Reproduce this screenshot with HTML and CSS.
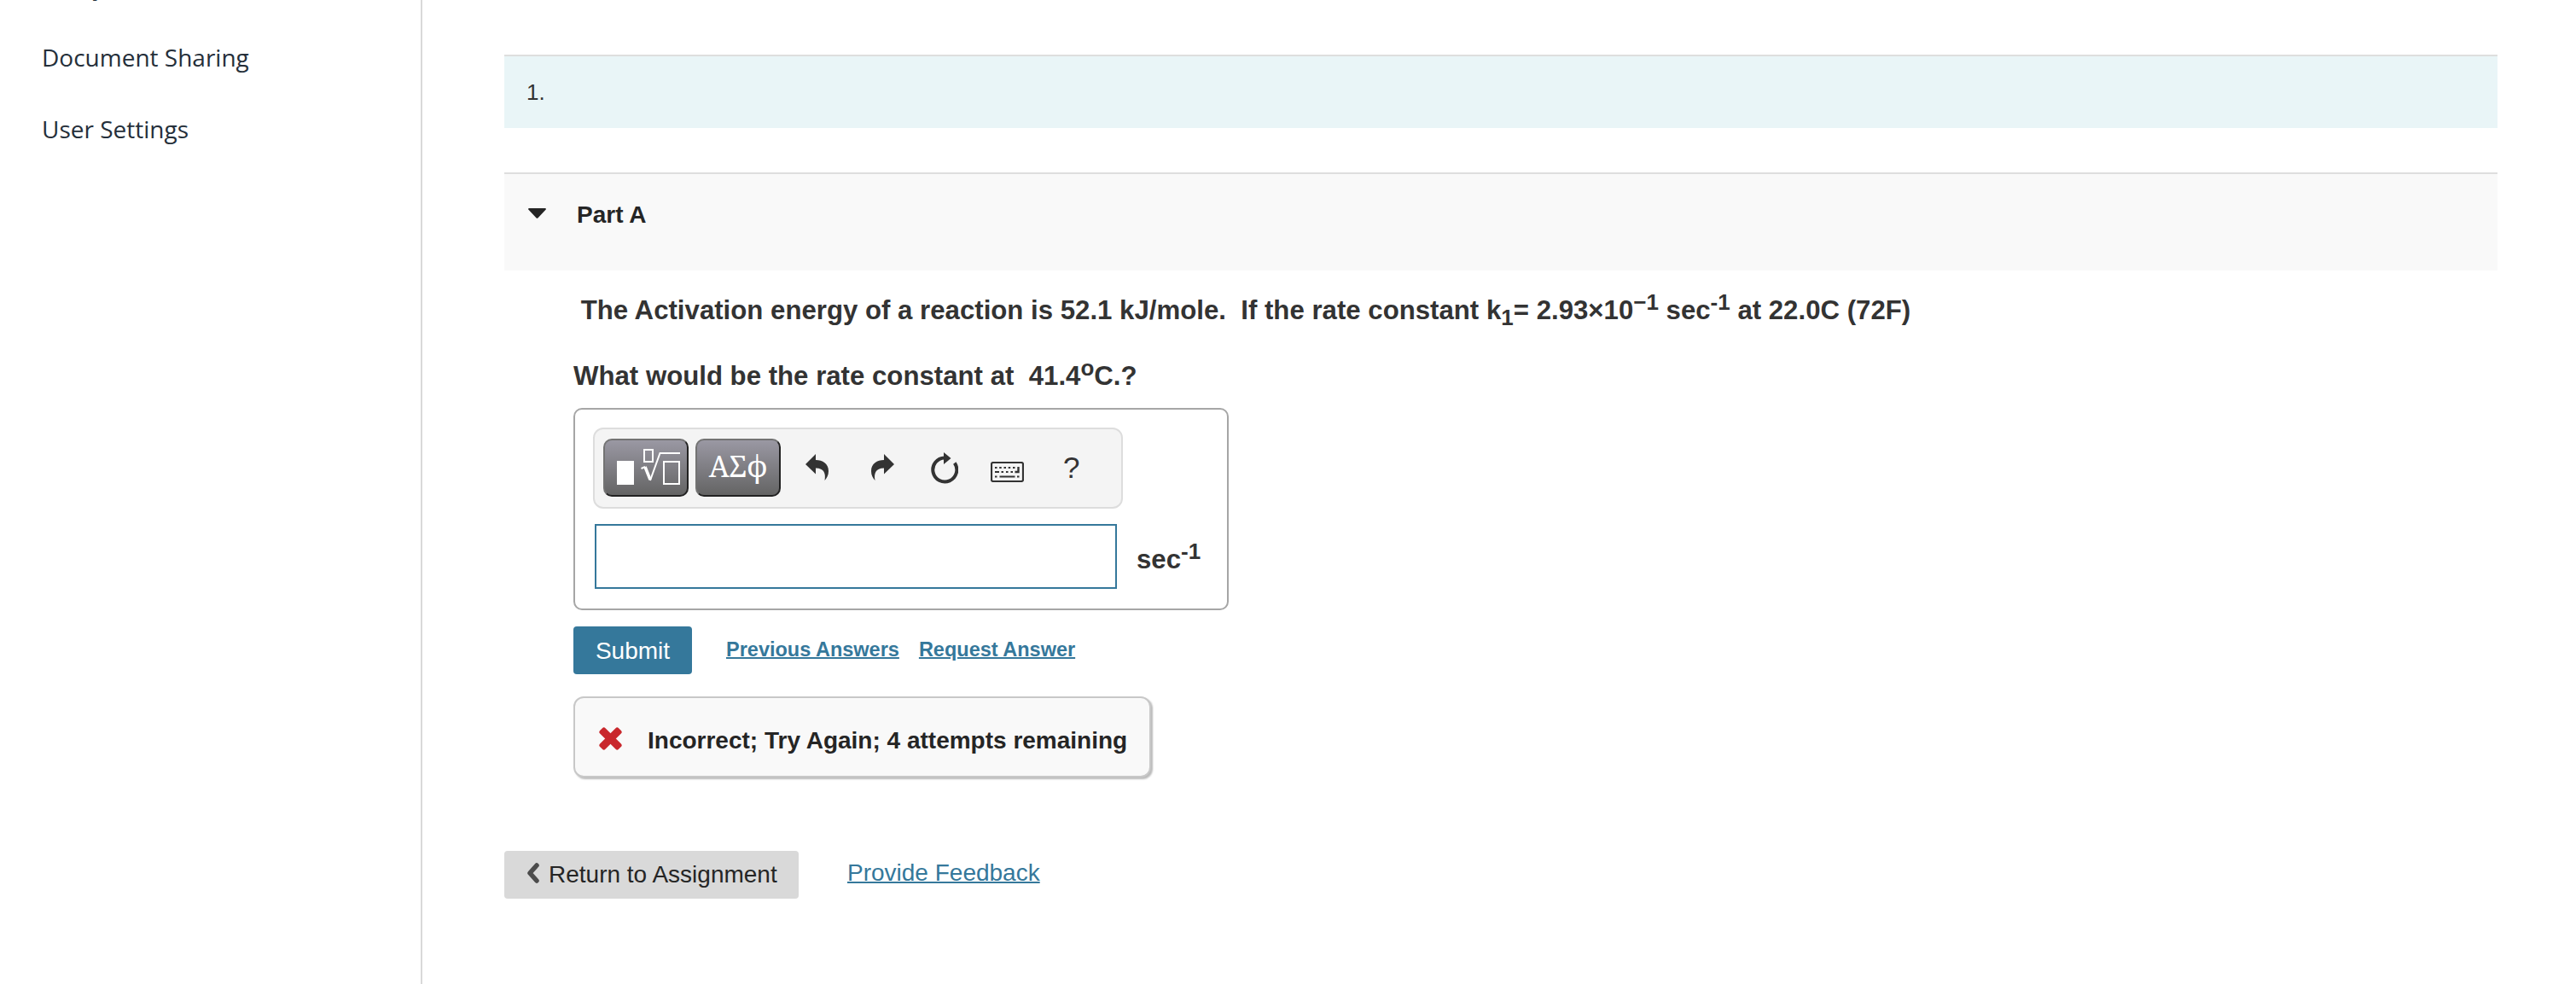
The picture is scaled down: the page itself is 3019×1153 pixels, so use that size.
FILE: index.html
```html
<!DOCTYPE html>
<html lang="en">
<head>
    <meta charset="UTF-8">
    <meta name="viewport" content="width=device-width, initial-scale=1.0">
    <title>Part A</title>
    <link rel="stylesheet" href="styles.css">
</head>
<body>
    <nav class="sidebar">
        <a>Study Area</a>
        <a>Document Sharing</a>
        <a>User Settings</a>
    </nav>
    <main class="content">
        <div class="item-number">1.</div>
        <section class="part">
            <div class="part-header">
                <svg class="caret" width="21" height="12" viewBox="0 0 21 12"><path d="M1 0H20Q21.5 .5 20.5 1.8L11.6 11.2Q10.500 12.400 9.400 11.2L.5 1.800Q-.5 .5 1 0Z" fill="#252525"/></svg>
                <h2>Part A</h2>
            </div>
            <div class="part-body">
                <p class="question">&nbsp;The Activation energy of a reaction is 52.1 kJ/mole.&nbsp; If the rate constant k<sub>1</sub>= 2.93×10<sup>−1</sup> sec<sup>-1</sup> at 22.0C (72F)</p>
                <p class="question second">What would be the rate constant at&nbsp; 41.4<sup>o</sup>C.?</p>
                <div class="answer-box">
                    <div class="toolbar">
                        <button class="tool-btn">
                            <svg width="96" height="64" viewBox="0 0 96 64" fill="none" stroke="#fff">
                                <rect x="14" y="24" width="20" height="28" fill="#fff" stroke="none"/>
                                <rect x="46" y="11" width="10" height="14" stroke-width="2"/>
                                <path d="M42.500 33L47 31" stroke-width="2"/>
                                <path d="M47 31L53 46" stroke-width="3.500"/>
                                <path d="M53 47L64.500 15H88" stroke-width="2"/>
                                <rect x="69" y="25" width="18" height="26" stroke-width="2"/>
                            </svg>
                        </button>
                        <button class="tool-btn greek">ΑΣϕ</button>
                        <div class="tool-icons">
                            <svg class="undo" width="27" height="31" viewBox="0 0 27 31"><path d="M0 12L12 0V7C20 7 27 11 27 20C27 25 25 28 22.500 31C24 23 22 16.500 12 16.500V23.500Z" fill="#333"/></svg>
                            <svg class="redo" width="27" height="31" viewBox="0 0 27 31"><path d="M27 12L15 0V7C7 7 0 11 0 20C0 25 2 28 4.500 31C3 23 5 16.500 15 16.500V23.500Z" fill="#333"/></svg>
                            <svg class="reset" width="32" height="37" viewBox="0 0 32 37"><path d="M16 6.500A14 14 0 1 0 27.800 12.500" fill="none" stroke="#333" stroke-width="4"/><path d="M15 0L23.500 7L15 14Z" fill="#333"/></svg>
                            <svg class="keyboard" width="39" height="24" viewBox="0 0 39 24">
                                <rect x="1" y="1" width="37" height="22" rx="2" fill="none" stroke="#333" stroke-width="2.200"/>
                                <path d="M5 7H7.500M10.200 7H12.700M15.500 7H18M20.700 7H23.200M26 7H28.500M5 12H10M12.500 12H15M18 12H20.500M23.500 12H26M5 17.500H7.500M10.500 17.500H28.500M31 17.500H33.500" stroke="#333" stroke-width="2.200"/>
                                <path d="M28.500 12H32.500V6" fill="none" stroke="#333" stroke-width="2.400"/>
                            </svg>
                            <span class="help">?</span>
                        </div>
                    </div>
                    <div class="answer-row">
                        <input class="answer-input" type="text">
                        <span class="unit">sec<sup>-1</sup></span>
                    </div>
                </div>
                <div class="actions">
                    <button class="submit">Submit</button>
                    <a class="previous">Previous Answers</a>
                    <a class="request">Request Answer</a>
                </div>
                <div class="feedback">
                    <svg width="27" height="27" viewBox="0 0 27 27" fill="#c9282d">
                        <rect x="-2" y="9" width="31" height="9" rx="2.500" transform="rotate(45 13.500 13.500)"/>
                        <rect x="-2" y="9" width="31" height="9" rx="2.500" transform="rotate(-45 13.500 13.500)"/>
                    </svg>
                    <span>Incorrect; Try Again; 4 attempts remaining</span>
                </div>
            </div>
        </section>
        <div class="footer">
            <button class="return">
                <svg width="15" height="24" viewBox="0 0 15 24"><path d="M12 3L4 12L12 21" fill="none" stroke="#4c4c4c" stroke-width="5.500" stroke-linecap="round" stroke-linejoin="round"/></svg>
                <span>Return to Assignment</span>
            </button>
            <a class="provide">Provide Feedback</a>
        </div>
    </main>
</body>
</html>
```
FILE: styles.css
```css
* {
    box-sizing: border-box;
}
body {
    margin: 0;
    height: 1153px;
    display: flex;
    overflow: hidden;
    background: #fff;
    color: #252525;
    font-family: "Liberation Sans", Arial, sans-serif;
    font-size: 28px;
}
svg {
    display: block;
    flex: none;
}
button {
    font-family: inherit;
    padding: 0;
    border: none;
}
.sidebar {
    width: 495px;
    flex: none;
    border-right: 2px solid #d9d9d9;
    padding-left: 49px;
    font-family: "Open Sans", sans-serif;
    font-size: 28px;
    color: #252f3a;
}
.sidebar a {
    display: block;
    height: 84px;
    line-height: 84px;
}
.sidebar a:first-child {
    margin-top: -59px;
}
.content {
    width: 2432px;
    padding: 64px 0 0 96px;
}
.item-number {
    height: 86px;
    border-top: 2px solid #dedede;
    background: #e9f5f7;
    padding: 26px 0 0 26px;
    font-size: 26px;
    line-height: 32px;
    color: #333;
}
.part {
    margin-top: 52px;
}
.part-header {
    height: 115px;
    border-top: 2px solid #dedede;
    background: #f9f9f9;
    display: flex;
    padding-left: 28px;
}
.caret {
    margin-top: 40px;
}
.part-header h2 {
    margin: 32px 0 0 36px;
    font-size: 28px;
    line-height: 32px;
}
.part-body {
    padding-left: 81px;
}
.question {
    margin: 0;
    padding-top: 29px;
    height: 77px;
    font-size: 31.2px;
    font-weight: bold;
    line-height: 36px;
    color: #333;
    white-space: nowrap;
}
.question.second {
    height: 84px;
}
sub, sup {
    font-size: 26px;
    line-height: 0;
    vertical-align: baseline;
    position: relative;
}
sup {
    top: -11px;
}
sub {
    top: 7px;
}
.answer-box {
    width: 768px;
    height: 237px;
    border: 2px solid #a6a6a6;
    border-radius: 10px;
    padding: 21px;
}
.toolbar {
    width: 621px;
    height: 95px;
    border: 2px solid #ddd;
    border-radius: 12px;
    background: #f4f4f4;
    display: flex;
    gap: 8px;
    padding: 11px 10px;
}
.tool-btn {
    width: 100px;
    height: 68px;
    flex: none;
    border: 2px solid;
    border-color: #737373 #222 #222 #737373;
    border-radius: 10px;
    background: linear-gradient(#9a98a3, #646464);
    color: #fff;
}
.greek {
    font-family: "Noto Serif", "DejaVu Serif", "Liberation Serif", serif;
    font-size: 34px;
    padding-bottom: 5px;
}
.tool-icons {
    display: flex;
    align-items: flex-start;
}
.undo {
    margin: 18px 0 0 21px;
}
.redo {
    margin: 18px 0 0 50px;
}
.reset {
    margin: 16px 0 0 43px;
}
.keyboard {
    margin: 27px 0 0 38px;
}
.help {
    margin: 13px 0 0 46px;
    font-size: 35px;
    line-height: 42px;
    color: #333;
}
.answer-row {
    display: flex;
    padding: 18px 0 0 2px;
}
.answer-input {
    appearance: none;
    width: 612px;
    height: 76px;
    border: 2px solid #35789b;
    border-radius: 0;
    outline: none;
}
.unit {
    margin: 24px 0 0 23px;
    font-size: 31.2px;
    line-height: 36px;
    font-weight: bold;
    color: #333;
}
.actions {
    margin-top: 19px;
    display: flex;
}
.actions a, .provide {
    color: #35789b;
    text-decoration: underline;
    text-decoration-thickness: 2px;
}
.submit {
    width: 139px;
    height: 56px;
    border-radius: 4px;
    background: #35789b;
    color: #fff;
    font-size: 28px;
    padding-top: 2px;
}
.actions a {
    font-size: 23.5px;
    font-weight: bold;
    line-height: 28px;
    padding-top: 13px;
}
.previous {
    margin-left: 40px;
}
.request {
    margin-left: 23px;
}
.feedback {
    width: 677px;
    height: 95px;
    margin-top: 26px;
    border: 2px solid #c8c8c8;
    border-radius: 12px;
    background: #f9f9f9;
    box-shadow: 2px 2px 2px #bbb;
    display: flex;
    padding: 34px 0 0 28px;
    font-weight: bold;
    line-height: 32px;
}
.feedback span {
    margin: 0 0 0 30px;
}
.footer {
    display: flex;
    margin-top: 86px;
}
.return {
    width: 345px;
    height: 56px;
    border-radius: 4px;
    background: #d9d9d9;
    color: #252525;
    font-size: 28px;
    display: flex;
    padding: 14px 0 0 26px;
}
.return span {
    margin-left: 11px;
    line-height: 28px;
    white-space: nowrap;
}
.provide {
    margin-left: 57px;
    padding-top: 10px;
    line-height: 32px;
}
```
